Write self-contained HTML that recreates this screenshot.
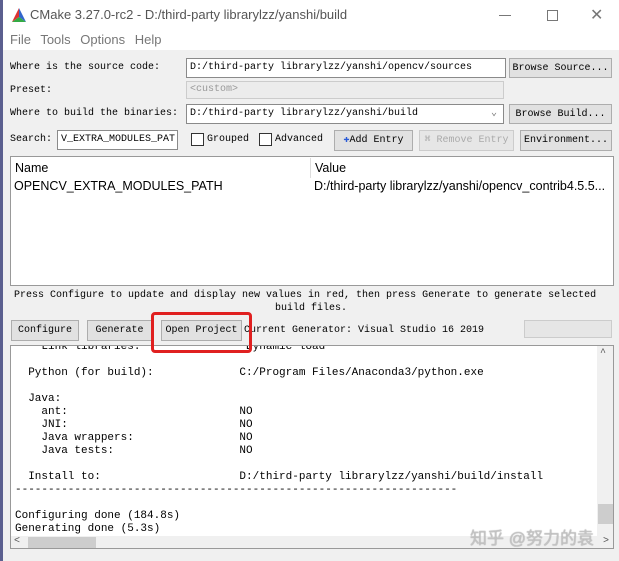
<!DOCTYPE html>
<html><head><meta charset="utf-8"><style>
*{margin:0;padding:0;box-sizing:border-box}
body{width:619px;height:561px;overflow:hidden;background:#f0f0f0;position:relative;font-family:"Liberation Mono",monospace;font-size:10px;color:#000}
.a{position:absolute;white-space:nowrap}
.sans{font-family:"Liberation Sans","Noto Sans CJK SC",sans-serif}
.in{position:absolute;background:#fff;border:1px solid #8a8a8a;padding:2px 3px;font-size:10px;line-height:14px;white-space:nowrap;overflow:hidden}
.btn{position:absolute;background:#e1e1e1;border:1px solid #adadad;text-align:center;font-size:10px;line-height:19px;white-space:nowrap;overflow:hidden}
.cb{position:absolute;width:13px;height:13px;border:1px solid #333;background:#fff}
.out{font-size:11px;line-height:13px}
</style></head><body>
<div class="a" style="left:0;top:0;width:619px;height:50px;background:#fff"></div>
<div class="a" style="left:0;top:0;width:3px;height:561px;background:#5b5f8f"></div>
<svg class="a" style="left:11px;top:7px" width="16" height="16" viewBox="0 0 16 16"><polygon points="8,1 1,15 8,10" fill="#d33"/><polygon points="8,1 15,15 8,10" fill="#36c"/><polygon points="1,15 15,15 8,10" fill="#3a4"/></svg>
<div class="a sans" style="left:30px;top:7px;font-size:13px;color:#555">CMake 3.27.0-rc2 - D:/third-party librarylzz/yanshi/build</div>
<div class="a" style="left:499px;top:15px;width:12px;height:1px;background:#777"></div>
<div class="a" style="left:547px;top:10px;width:11px;height:11px;border:1px solid #777"></div>
<div class="a sans" style="left:590px;top:5px;font-size:16px;color:#777">✕</div>
<div class="a sans" style="left:10px;top:32px;font-size:13px;color:#777;word-spacing:6px">File Tools Options Help</div>

<div class="a" style="left:10px;top:62px">Where is the source code:</div>
<div class="in" style="left:186px;top:58px;width:320px;height:20px">D:/third-party librarylzz/yanshi/opencv/sources</div>
<div class="btn" style="left:509px;top:58px;width:103px;height:20px">Browse Source...</div>
<div class="a" style="left:10px;top:85px">Preset:</div>
<div class="in" style="left:186px;top:81px;width:318px;height:18px;background:#ececec;border-color:#ccc;color:#999;line-height:12px">&lt;custom&gt;</div>
<div class="a" style="left:10px;top:108px">Where to build the binaries:</div>
<div class="in" style="left:186px;top:104px;width:318px;height:20px">D:/third-party librarylzz/yanshi/build<span style="position:absolute;right:6px;color:#777">⌄</span></div>
<div class="btn" style="left:509px;top:104px;width:103px;height:20px">Browse Build...</div>
<div class="a" style="left:10px;top:134px">Search:</div>
<div class="in" style="left:57px;top:130px;width:121px;height:20px">V_EXTRA_MODULES_PAT</div>
<div class="cb" style="left:191px;top:133px"></div><div class="a" style="left:207px;top:134px">Grouped</div>
<div class="cb" style="left:259px;top:133px"></div><div class="a" style="left:275px;top:134px">Advanced</div>
<div class="btn" style="left:334px;top:130px;width:79px;height:21px"><span style="color:#2a5bd7">✚</span>Add Entry</div>
<div class="btn" style="left:419px;top:130px;width:95px;height:21px;color:#aaa;background:#e6e6e6;border-color:#ccc">⌘ Remove Entry</div>
<div class="btn" style="left:520px;top:130px;width:92px;height:21px">Environment...</div>

<div class="a" style="left:10px;top:156px;width:604px;height:130px;background:#fff;border:1px solid #999"></div>
<div class="a" style="left:310px;top:158px;width:1px;height:20px;background:#ddd"></div>
<div class="a sans" style="left:15px;top:161px;font-size:12.5px">Name</div>
<div class="a sans" style="left:315px;top:161px;font-size:12.5px">Value</div>
<div class="a sans" style="left:14px;top:179px;font-size:12.5px">OPENCV_EXTRA_MODULES_PATH</div>
<div class="a sans" style="left:314px;top:179px;font-size:12.5px">D:/third-party librarylzz/yanshi/opencv_contrib4.5.5...</div>

<div class="a" style="left:14px;top:290px">Press Configure to update and display new values in red, then press Generate to generate selected</div>
<div class="a" style="left:275px;top:303px">build files.</div>
<div class="btn" style="left:11px;top:320px;width:68px;height:21px">Configure</div>
<div class="btn" style="left:87px;top:320px;width:65px;height:21px">Generate</div>
<div class="btn" style="left:161px;top:320px;width:81px;height:21px">Open Project</div>
<div class="a" style="left:244px;top:325px">Current Generator: Visual Studio 16 2019</div>
<div class="a" style="left:524px;top:320px;width:88px;height:18px;background:#e6e6e6;border:1px solid #ccc"></div>

<div class="a" style="left:10px;top:345px;width:604px;height:204px;background:#fff;border:1px solid #999;overflow:hidden">
<pre class="out" style="position:absolute;left:4px;top:-5px;font-family:'Liberation Mono',monospace">    Link libraries:                Dynamic load

  Python (for build):             C:/Program Files/Anaconda3/python.exe

  Java:
    ant:                          NO
    JNI:                          NO
    Java wrappers:                NO
    Java tests:                   NO

  Install to:                     D:/third-party librarylzz/yanshi/build/install
-------------------------------------------------------------------

Configuring done (184.8s)
Generating done (5.3s)</pre>
<div class="a" style="left:586px;top:0;width:17px;height:190px;background:#f0f0f0"></div>
<div class="a" style="left:587px;top:158px;width:15px;height:20px;background:#cdcdcd"></div>
<div class="a" style="left:589px;top:2px;color:#555">^</div>
<div class="a" style="left:0;top:190px;width:603px;height:13px;background:#f0f0f0"></div>
<div class="a" style="left:17px;top:191px;width:68px;height:11px;background:#cdcdcd"></div>
<div class="a" style="left:3px;top:190px;color:#555">&lt;</div>
<div class="a" style="left:592px;top:190px;color:#555">&gt;</div>
</div>
<div class="a sans" style="left:470px;top:524px;font-size:17px;color:rgba(200,200,200,0.9);text-shadow:0 0 1px #888">知乎 @努力的袁</div>

<div class="a" style="left:151px;top:312px;width:101px;height:41px;border:3px solid #e02020;border-radius:4px"></div>
</body></html>
